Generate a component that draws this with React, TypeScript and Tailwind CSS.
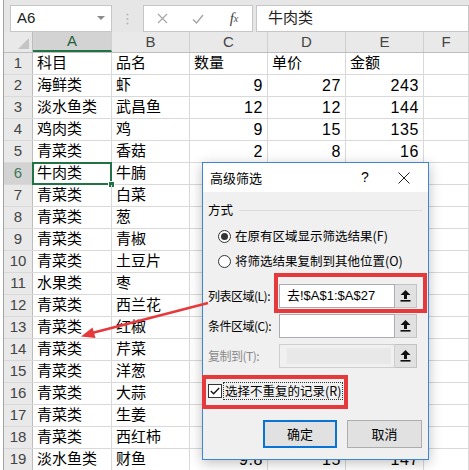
import React from "react";

type Row = [string, string, string, string, string];

// C/D/E of rows 6-18 sit under the dialog, so they stay blank here
const ROWS: Row[] = [
  ["科目", "品名", "数量", "单价", "金额"],
  ["海鲜类", "虾", "9", "27", "243"],
  ["淡水鱼类", "武昌鱼", "12", "12", "144"],
  ["鸡肉类", "鸡", "9", "15", "135"],
  ["青菜类", "香菇", "2", "8", "16"],
  ["牛肉类", "牛腩", "", "", ""],
  ["青菜类", "白菜", "", "", ""],
  ["青菜类", "葱", "", "", ""],
  ["青菜类", "青椒", "", "", ""],
  ["青菜类", "土豆片", "", "", ""],
  ["水果类", "枣", "", "", ""],
  ["青菜类", "西兰花", "", "", ""],
  ["青菜类", "红椒", "", "", ""],
  ["青菜类", "芹菜", "", "", ""],
  ["青菜类", "洋葱", "", "", ""],
  ["青菜类", "大蒜", "", "", ""],
  ["青菜类", "生姜", "", "", ""],
  ["青菜类", "西红柿", "", "", ""],
  ["淡水鱼类", "财鱼", "9.8", "15", "147"],
];

const COLS = ["A", "B", "C", "D", "E", "F"];
const COL_W = ["w-[79px]", "w-[78px]", "w-[78px]", "w-[78px]", "w-[78px]", "flex-1"];

function Toolbar() {
  return (
    <div className="h-[41px] bg-[#e6e6e6] flex items-start pt-[5px] pl-[6px]">
      <div className="w-[102px] h-[27px] bg-white border border-[#c6c6c6] flex items-center pl-[6px] pr-[6px]">
        <span className="flex-1 text-[15px] text-[#222]">A6</span>
        <svg width="8" height="5" viewBox="0 0 8 5"><path d="M0 0h8L4 4z" fill="#8a8a8a" /></svg>
      </div>
      <div className="w-[31px] h-[27px] flex items-center justify-center">
        <svg width="3" height="12" viewBox="0 0 3 12">
          <circle cx="1.5" cy="1.5" r="1" fill="#b5b5b5" />
          <circle cx="1.5" cy="6" r="1" fill="#b5b5b5" />
          <circle cx="1.5" cy="10.5" r="1" fill="#b5b5b5" />
        </svg>
      </div>
      <div className="w-[110px] h-[27px] bg-white border border-[#c6c6c6] flex items-center">
        <div className="w-[36px] flex justify-center">
          <svg width="11" height="11" viewBox="0 0 11 11"><path d="M1 1l9 9M10 1l-9 9" stroke="#a6a6a6" strokeWidth="1.2" /></svg>
        </div>
        <div className="w-[36px] flex justify-center">
          <svg width="12" height="10" viewBox="0 0 12 10"><path d="M1 5.5l3.5 3.5L11 1" stroke="#a6a6a6" strokeWidth="1.4" fill="none" /></svg>
        </div>
        <div className="w-[36px] flex justify-center font-['Liberation_Serif',serif] italic text-[15px] text-[#444] leading-none">
          f<span className="text-[10px] translate-y-[3px]">x</span>
        </div>
      </div>
      <div className="flex-1 h-[27px] ml-[3px] bg-white border border-[#c6c6c6] flex items-center pl-[11px] text-[15px] text-[#222]">
        牛肉类
      </div>
    </div>
  );
}

function HeaderRow() {
  return (
    <div className="flex h-[21px] bg-[#e9e9e9] border-b border-[#bdbdbd]">
      <div className="w-[29px] border-r border-[#bdbdbd] relative">
        <svg className="absolute right-[3px] bottom-[3px]" width="11" height="11" viewBox="0 0 11 11">
          <path d="M11 0v11H0z" fill="#c4c4c4" />
        </svg>
      </div>
      {COLS.map((c, i) => (
        <div
          key={c}
          className={`${COL_W[i]} flex items-center justify-center text-[15px] border-r border-[#d0d0d0] ${
            i === 0 ? "bg-[#d3d3d3] text-[#1f5f3a] border-b-2 border-b-[#217346]" : "text-[#444]"
          }`}
        >
          {c}
        </div>
      ))}
    </div>
  );
}

function DataRow({ row, n }: { row: Row; n: number }) {
  const sel = n === 6;
  return (
    <div className="flex h-[22px] border-b border-[#d9d9d9]">
      <div
        className={`w-[29px] flex items-center justify-center text-[15px] border-r border-[#bdbdbd] ${
          sel ? "bg-[#d3d3d3] text-[#41795a]" : "bg-[#e9e9e9] text-[#444]"
        }`}
      >
        {n}
      </div>
      {[...row, ""].map((v, i) => {
        const num = v !== "" && !isNaN(Number(v));
        return (
          <div
            key={i}
            className={`${COL_W[i]} relative flex items-center border-r border-[#d9d9d9] ${
              num ? "justify-end pr-[4px] text-[16px] tracking-[0.6px]" : "pl-[4px] text-[15px]"
            } text-black`}
          >
            {v}
            {sel && i === 0 && (
              <>
                <div className="absolute -top-px -left-px -right-px -bottom-px border-2 border-[#217346]" />
                <div className="absolute -right-[4px] -bottom-[4px] w-[7px] h-[7px] bg-[#217346] border border-white" />
              </>
            )}
          </div>
        );
      })}
    </div>
  );
}

function UpIcon() {
  return (
    <svg width="11" height="12" viewBox="0 0 11 12">
      <path d="M5.5 0L10.5 5H7v4H4V5H0.5z" fill="#111" />
      <rect x="0.5" y="10" width="10" height="1.6" fill="#111" />
    </svg>
  );
}

function Radio({ on, label }: { on?: boolean; label: string }) {
  return (
    <div className="h-[25px] flex items-center pl-[15px] gap-[4px] text-[12.5px]">
      <div className="w-[13px] h-[13px] rounded-full border border-[#333] bg-white flex items-center justify-center">
        {on && <div className="w-[7px] h-[7px] rounded-full bg-[#333]" />}
      </div>
      <span>{label}</span>
    </div>
  );
}

function RefField({ label, value, disabled }: { label: string; value?: string; disabled?: boolean }) {
  return (
    <div className="flex h-[24px] items-center">
      <span className={`w-[76px] pl-[5px] text-[12px] tracking-[-0.5px] whitespace-nowrap ${disabled ? "text-[#8a8a8a]" : "text-black"}`}>{label}</span>
      <div
        className={`w-[116px] h-full border flex items-center pl-[7px] font-['Liberation_Sans','Noto_Sans_CJK_SC',sans-serif] text-[13px] ${
          disabled ? "bg-[#f0f0f0] border-[#cfcfcf] p-[3px]" : "bg-white border-[#abadb3]"
        }`}
      >
        {disabled ? <div className="w-full h-full bg-[#e8e8e8]" /> : value}
      </div>
      <div className="w-[22px] h-full bg-[#e1e1e1] border border-l-0 border-[#c3c3c3] flex items-center justify-center">
        <UpIcon />
      </div>
    </div>
  );
}

function FilterDialog() {
  return (
    <div className="absolute left-[202px] top-[162px] w-[227px] h-[298px] border border-[#3b86d6] bg-[#f0f0f0] shadow-[0_3px_12px_rgba(0,0,0,0.25)] text-[12.5px] text-black font-['Noto_Sans_CJK_SC',sans-serif]">
      <div className="h-[29px] bg-white flex items-center">
        <span className="flex-1 pl-[7px] text-[13px]">高级筛选</span>
        <span className="w-[20px] text-[14px] font-['Liberation_Sans',sans-serif]">?</span>
        <div className="w-[47px] flex justify-center pr-[2px]">
          <svg width="12" height="12" viewBox="0 0 12 12"><path d="M0.5 0.5l11 11M11.5 0.5l-11 11" stroke="#222" strokeWidth="1" /></svg>
        </div>
      </div>
      <div className="flex flex-col">
        <div className="mt-[9px] h-[18px] flex items-center pl-[5px] gap-[6px]">
          <span>方式</span>
          <div className="flex-1 h-px bg-[#dcdcdc] mr-[6px]" />
        </div>
        <div className="mt-[5px]">
          <Radio on label="在原有区域显示筛选结果(F)" />
          <Radio label="将筛选结果复制到其他位置(O)" />
        </div>
        <div className="mt-[10px] flex flex-col gap-[6px]">
          <RefField label="列表区域(L):" value="去!$A$1:$A$27" />
          <RefField label="条件区域(C):" />
          <RefField label="复制到(T):" disabled />
        </div>
        <div className="mt-[13px] h-[20px] flex items-center pl-[5px] gap-[2px]">
          <div className="w-[14px] h-[14px] border border-[#333] bg-white flex items-center justify-center">
            <svg width="10" height="8" viewBox="0 0 10 8"><path d="M0.8 4l2.8 2.8L9.2 1" stroke="#111" strokeWidth="1.3" fill="none" /></svg>
          </div>
          <span className="px-px outline outline-1 outline-dotted outline-[#333] leading-[16px]">选择不重复的记录(R)</span>
        </div>
        <div className="mt-[19px] flex gap-[10px] pl-[60px]">
          <button className="w-[74px] h-[28px] bg-[#e1e1e1] border-2 border-[#0a74d6] text-[13px]">确定</button>
          <button className="w-[75px] h-[28px] bg-[#e1e1e1] border border-[#adadad] text-[13px]">取消</button>
        </div>
      </div>
      <div className="absolute left-[71px] top-[110px] w-[153px] h-[40px] border-[4px] border-[#e5393b]" />
      <div className="absolute -left-px top-[212px] w-[146px] h-[34px] border-[4px] border-[#e5393b]" />
    </div>
  );
}

export default function App() {
  return (
    <div className="relative w-[469px] h-[470px] overflow-hidden bg-white pl-[3px] font-['Liberation_Sans','Noto_Sans_CJK_SC',sans-serif]">
      <div className="h-full border-l border-[#a3a3a3] flex flex-col">
        <Toolbar />
        <HeaderRow />
        {ROWS.map((r, i) => (
          <DataRow key={i} row={r} n={i + 1} />
        ))}
      </div>
      <FilterDialog />
      <svg className="absolute inset-0 pointer-events-none" width="469" height="470" viewBox="0 0 469 470">
        <line x1="208" y1="303" x2="92" y2="333" stroke="#e5393b" strokeWidth="2.5" />
        <path d="M81 336.5L95.5 338L92.5 327.5z" fill="#e5393b" />
      </svg>
    </div>
  );
}
